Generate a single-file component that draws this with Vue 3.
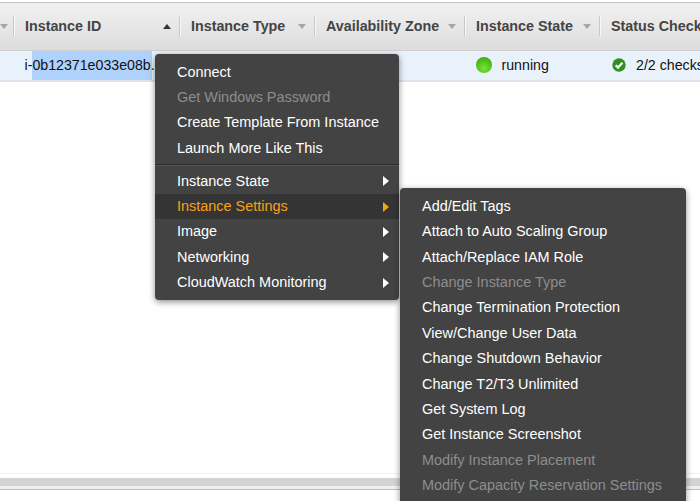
<script setup>
const columns = [
  { label: 'Instance ID', width: 166, up: true },
  { label: 'Instance Type', width: 135 },
  { label: 'Availability Zone', width: 150 },
  { label: 'Instance State', width: 135 },
  { label: 'Status Checks', width: 101, noArrow: true },
]
const mainTop = [
  { t: 'Connect' },
  { t: 'Get Windows Password', off: true },
  { t: 'Create Template From Instance' },
  { t: 'Launch More Like This' },
]
const mainBottom = [
  { t: 'Instance State' },
  { t: 'Instance Settings', active: true },
  { t: 'Image' },
  { t: 'Networking' },
  { t: 'CloudWatch Monitoring' },
]
const sub = [
  { t: 'Add/Edit Tags' },
  { t: 'Attach to Auto Scaling Group' },
  { t: 'Attach/Replace IAM Role' },
  { t: 'Change Instance Type', off: true },
  { t: 'Change Termination Protection' },
  { t: 'View/Change User Data' },
  { t: 'Change Shutdown Behavior' },
  { t: 'Change T2/T3 Unlimited' },
  { t: 'Get System Log' },
  { t: 'Get Instance Screenshot' },
  { t: 'Modify Instance Placement', off: true },
  { t: 'Modify Capacity Reservation Settings', off: true },
]
</script>

<template>
  <div class="page">
    <div class="topline"></div>
    <div class="head">
      <div class="stub"><span class="arrow down"></span></div>
      <div
        v-for="c in columns"
        :key="c.label"
        class="col"
        :style="{ width: c.width + 'px' }"
      >
        <span class="col-label">{{ c.label }}</span>
        <span v-if="!c.noArrow" class="arrow" :class="c.up ? 'up' : 'down'"></span>
      </div>
    </div>
    <div class="row">
      <div class="cell-id"><span>i-</span><span class="sel">0b12371e033e08b.</span></div>
      <div class="cell-state">
        <span class="dot"></span>
        <span>running</span>
      </div>
      <div class="cell-check">
        <svg class="check" width="14" height="14" viewBox="0 0 14 14">
          <circle cx="7" cy="7" r="6.7" fill="#2f8f1f" />
          <path d="M3.7 7.2 6 9.6 10.4 4.8" fill="none" stroke="#fff" stroke-width="2.2" />
        </svg>
        <span>2/2 checks</span>
      </div>
    </div>
    <div class="blank"></div>
    <div class="scrollbar"></div>

    <div class="menu main">
      <div v-for="m in mainTop" :key="m.t" class="item" :class="{ off: m.off }">{{ m.t }}</div>
      <div class="sep"></div>
      <div v-for="m in mainBottom" :key="m.t" class="item has-sub" :class="{ active: m.active }">
        <span>{{ m.t }}</span>
        <span class="tri"></span>
      </div>
    </div>

    <div class="menu submenu">
      <div v-for="m in sub" :key="m.t" class="item" :class="{ off: m.off }">{{ m.t }}</div>
    </div>
  </div>
</template>

<style scoped>
.page {
  position: relative;
  width: 700px;
  height: 501px;
  overflow: hidden;
  background: #fff;
  font-family: "Liberation Sans", Arial, sans-serif;
  color: #111;
  display: flex;
  flex-direction: column;
}
.topline {
  height: 3px;
  flex: none;
  background: linear-gradient(#fff 0 2px, #c4c4c4 2px);
}
.head {
  height: 46px;
  padding-bottom: 1px;
  flex: none;
  display: flex;
  align-items: center;
  background: linear-gradient(#f1f1f1, #e3e3e3 70%, #dcdcdc);
  border-bottom: 1px solid #d0d0d0;
  box-sizing: content-box;
}
.stub {
  width: 12.5px;
  flex: none;
  height: 20px;
  display: flex;
  align-items: center;
  justify-content: flex-end;
  overflow: hidden;
}
.stub .arrow {
  margin-right: 5px;
}
.col {
  flex: none;
  height: 20px;
  box-sizing: border-box;
  display: flex;
  align-items: center;
  justify-content: space-between;
  padding: 0 8px 0 11.5px;
  border-left: 1px solid #c8c8c8;
  box-shadow: inset 1px 0 0 #f8f8f8;
}
.col:last-child {
  padding-right: 0;
}
.col-label {
  font-size: 14.3px;
  font-weight: 700;
  color: #444;
  white-space: nowrap;
}
.arrow {
  width: 0;
  height: 0;
  border-left: 4.5px solid transparent;
  border-right: 4.5px solid transparent;
  flex: none;
}
.arrow.down {
  border-top: 5px solid #a6a6a6;
}
.arrow.up {
  border-bottom: 5px solid #333;
}
.row {
  height: 29px;
  flex: none;
  display: flex;
  align-items: center;
  background: #e9f1fb;
  border-bottom: 2px solid #dde3ea;
  font-size: 14.2px;
  white-space: nowrap;
}
.cell-id {
  width: 476px;
  flex: none;
  height: 100%;
  padding: 0 0 1px 24.5px;
  box-sizing: border-box;
  display: flex;
  align-items: center;
}
.sel {
  background: #aed2fb;
  align-self: stretch;
  display: flex;
  align-items: center;
  width: 120px;
  margin-bottom: -1px;
  padding-bottom: 1px;
}
.cell-state {
  width: 136px;
  flex: none;
  display: flex;
  align-items: center;
  gap: 9.5px;
  padding-bottom: 1px;
  box-sizing: border-box;
}
.dot {
  width: 16px;
  height: 16px;
  border-radius: 50%;
  background: radial-gradient(circle at 50% 70%, #7fe03a, #3fb80e 70%, #2f9a0a);
}
.cell-check {
  display: flex;
  align-items: center;
  gap: 10px;
  padding-bottom: 1px;
}
.check {
  flex: none;
}
.blank {
  flex: 1;
}
.scrollbar {
  height: 18px;
  flex: none;
  margin-bottom: 10px;
  box-sizing: border-box;
  background: linear-gradient(#f0f0f0 0 1px, #fff 1px 5px, #d3d3d3 5px 13px, #f0f0f0 13px 16px, #bdbdbd 16px 17px, #fff 17px);
}
.menu {
  position: absolute;
  box-sizing: border-box;
  background: #434343;
  border-radius: 4px;
  box-shadow: 0 2px 6px rgba(0, 0, 0, 0.45);
  font-size: 14.45px;
  color: #fff;
  white-space: nowrap;
}
.main {
  left: 155px;
  top: 54px;
  width: 244px;
  height: 246px;
  padding-top: 5.6px;
}
.submenu {
  left: 400px;
  top: 188px;
  width: 286px;
  height: 320px;
  padding-top: 5.8px;
}
.item {
  height: 25.4px;
  line-height: 25.4px;
  padding-left: 22px;
}
.off {
  color: #8d8d8d;
}
.sep {
  height: 1px;
  margin: 2.6px 0 3.8px;
  background: #2a2a2a;
  box-shadow: 0 1px 0 #555;
}
.has-sub {
  display: flex;
  justify-content: space-between;
  align-items: center;
  padding-right: 10px;
}
.active {
  background: #343434;
  color: #f7a11b;
}
.tri {
  width: 0;
  height: 0;
  border-top: 5.5px solid transparent;
  border-bottom: 5.5px solid transparent;
  border-left: 6.5px solid currentColor;
}
</style>
